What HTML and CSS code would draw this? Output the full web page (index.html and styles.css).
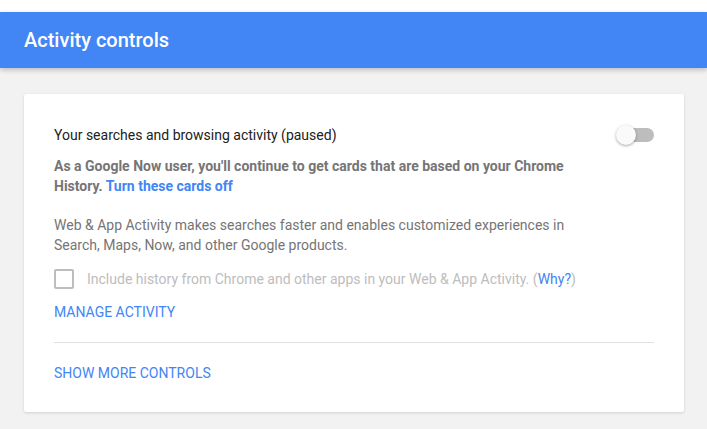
FILE: index.html
```html
<!DOCTYPE html>
<html>
<head>
<meta charset="utf-8">
<link rel="stylesheet" href="styles.css">
</head>
<body>
<div class="topstrip"></div>
<header class="appbar"><h1 class="title">Activity controls</h1></header>
<main class="content">
  <section class="card">
    <div class="row-head">
      <span class="head-text">Your searches and browsing activity (paused)</span>
      <span class="toggle"><span class="track"></span><span class="knob"></span></span>
    </div>
    <p class="note">As a Google Now user, you'll continue to get cards that are based on your Chrome History. <a class="link">Turn these cards off</a></p>
    <p class="desc">Web &amp; App Activity makes searches faster and enables customized experiences in Search, Maps, Now, and other Google products.</p>
    <div class="check-row">
      <span class="checkbox"></span>
      <span class="check-label">Include history from Chrome and other apps in your Web &amp; App Activity. (<a class="link">Why?</a>)</span>
    </div>
    <a class="action manage">MANAGE ACTIVITY</a>
    <hr class="divider">
    <a class="action more">SHOW MORE CONTROLS</a>
  </section>
</main>
</body>
</html>
```
FILE: styles.css
```css
html, body {
  margin: 0;
  padding: 0;
}
body {
  background: #f2f2f2;
  font-family: Roboto, "Liberation Sans", Arial, sans-serif;
  font-size: 14px;
  line-height: 20px;
  color: #212121;
  height: 429px;
  overflow: hidden;
}
.topstrip {
  height: 12px;
  background: #ffffff;
}
.appbar {
  height: 56px;
  background: #4285f4;
  display: flex;
  align-items: center;
  padding: 0 24px;
  box-shadow: 0 2px 5px rgba(0, 0, 0, 0.22);
  position: relative;
}
.title {
  margin: 0;
  font-size: 20px;
  font-weight: 500;
  color: #ffffff;
  line-height: 24px;
}
.content {
  padding: 26px 23px 0 24px;
}
.card {
  background: #ffffff;
  border-radius: 2px;
  box-shadow: 0 1px 3px rgba(0, 0, 0, 0.14);
  padding: 31px 30px 29px 30px;
  display: flex;
  flex-direction: column;
  align-items: flex-start;
}
.row-head {
  align-self: stretch;
  display: flex;
  justify-content: space-between;
  align-items: center;
  height: 20px;
}
.head-text {
  color: #212121;
}
.toggle {
  position: relative;
  width: 38px;
  height: 20px;
}
.track {
  position: absolute;
  left: 3px;
  top: 3px;
  width: 35px;
  height: 14px;
  border-radius: 7px;
  background: #bdbdbd;
}
.knob {
  position: absolute;
  left: 0;
  top: 0;
  width: 20px;
  height: 20px;
  border-radius: 50%;
  background: #fafafa;
  box-shadow: 0 1px 3px rgba(0, 0, 0, 0.35);
}
.note {
  margin: 11px 0 0 0;
  max-width: 530px;
  font-weight: 700;
  color: #757575;
}
.link {
  color: #4285f4;
  text-decoration: none;
  cursor: pointer;
}
.desc {
  margin: 19px 0 0 0;
  max-width: 530px;
  color: #757575;
}
.check-row {
  display: flex;
  align-items: center;
  margin-top: 14px;
}
.checkbox {
  width: 16px;
  height: 16px;
  border: 2px solid #bdbdbd;
  border-radius: 2px;
  flex: none;
}
.check-label {
  margin-left: 13px;
  color: #bdbdbd;
}
.action {
  color: #4285f4;
  text-decoration: none;
  cursor: pointer;
}
.manage {
  margin-top: 13px;
}
.divider {
  align-self: stretch;
  border: none;
  border-top: 1px solid #e0e0e0;
  margin: 20px 0 0 0;
  height: 0;
}
.more {
  margin-top: 20px;
}
```
